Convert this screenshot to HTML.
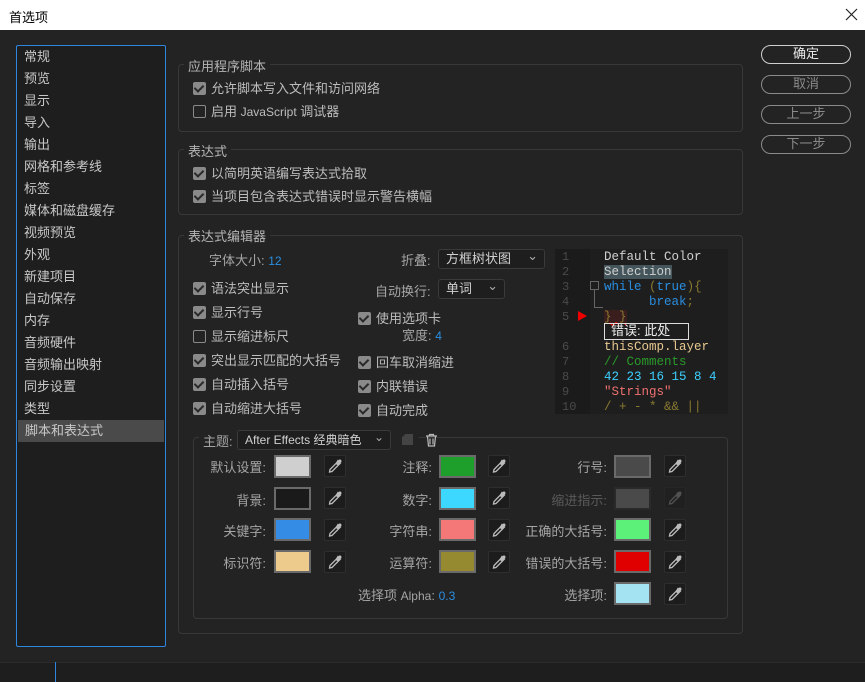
<!DOCTYPE html>
<html><head><meta charset="utf-8">
<style>
*{margin:0;padding:0;box-sizing:border-box}
body{width:865px;height:682px;overflow:hidden;background:#232323;font-family:"Liberation Sans","Noto Sans CJK SC",sans-serif;font-size:13px;color:#bdbdbd;position:relative}
.a{position:absolute;white-space:nowrap}
.title{left:0;top:0;width:865px;height:30px;background:#fff;color:#000}
.side{left:16px;top:45px;width:150px;height:602px;background:#1e1e1e;border:1px solid #2e86de;border-radius:2px}
.side div{height:22px;line-height:22px;padding-left:7px;color:#c8c8c8}
.grp{border:1px solid #383838;border-radius:4px}
.gt{background:#232323;padding:0 4px;color:#b5b5b5}
.cb{width:13px;height:13px;border-radius:2px;background:#8a8a8a;display:inline-block;vertical-align:-2px;margin-right:5px;position:relative}
.cb::after{content:"";position:absolute;left:3px;top:1px;width:4px;height:7px;border:solid #2a2a2a;border-width:0 2px 2px 0;transform:rotate(45deg)}
.cb.off{background:none;border:1.5px solid #8a8a8a}
.cb.off::after{display:none}
.btn{left:761px;width:90px;height:19px;border:1.5px solid #8a8a8a;border-radius:10px;text-align:center;line-height:16px;color:#8a8a8a}
.sel{background:#1e1e1e;border:1px solid #3a3a3a;border-radius:3px;height:20px;line-height:18px;padding-left:7px;color:#d0d0d0}
.sel::after{content:"⌄";position:absolute;right:6px;top:-3px;color:#aaa}
.lbl{text-align:right;color:#a5a5a5}
.sw{width:37px;height:23px;border:2px solid #6a6a6a}
.dp{width:22px;height:22px;background:#1c1c1c;border:1px solid #2e2e2e;border-radius:2px}
.code{font-family:"Liberation Mono","DejaVu Sans Mono",monospace;font-size:12.5px;line-height:15px}
.blue{color:#2a8ee0}
</style></head><body>
<div class="a title"><span class="a" style="left:9px;top:7px">首选项</span>
<svg class="a" style="left:845px;top:8px" width="13" height="13"><path d="M1 1L12 12M12 1L1 12" stroke="#222" stroke-width="1.2"/></svg></div>

<div class="a side">
<div>常规</div><div>预览</div><div>显示</div><div>导入</div><div>输出</div><div>网格和参考线</div><div>标签</div><div>媒体和磁盘缓存</div><div>视频预览</div><div>外观</div><div>新建项目</div><div>自动保存</div><div>内存</div><div>音频硬件</div><div>音频输出映射</div><div>同步设置</div><div>类型</div><div style="background:#4a4a4a;margin:0 1px">脚本和表达式</div>
</div>

<div class="a btn" style="top:45px;color:#e8e8e8;border-color:#cfcfcf">确定</div>
<div class="a btn" style="top:75px">取消</div>
<div class="a btn" style="top:105px">上一步</div>
<div class="a btn" style="top:135px">下一步</div>

<div class="a grp" style="left:178px;top:64px;width:565px;height:68px"></div>
<span class="a gt" style="left:184px;top:56px">应用程序脚本</span>
<div class="a" style="left:193px;top:78px"><span class="cb"></span>允许脚本写入文件和访问网络</div>
<div class="a" style="left:193px;top:101px"><span class="cb off"></span>启用 <span style="font-size:12px">JavaScript</span> 调试器</div>

<div class="a grp" style="left:178px;top:149px;width:565px;height:66px"></div>
<span class="a gt" style="left:184px;top:141px">表达式</span>
<div class="a" style="left:193px;top:163px"><span class="cb"></span>以简明英语编写表达式拾取</div>
<div class="a" style="left:193px;top:186px"><span class="cb"></span>当项目包含表达式错误时显示警告横幅</div>

<div class="a grp" style="left:178px;top:235px;width:565px;height:399px"></div>
<span class="a gt" style="left:184px;top:226px">表达式编辑器</span>
<div class="a" style="left:209px;top:250px;color:#a5a5a5">字体大小: <span class="blue" style="font-size:12px">12</span></div>
<div class="a" style="left:193px;top:278px"><span class="cb"></span>语法突出显示</div>
<div class="a" style="left:193px;top:302px"><span class="cb"></span>显示行号</div>
<div class="a" style="left:193px;top:326px"><span class="cb off"></span>显示缩进标尺</div>
<div class="a" style="left:193px;top:350px"><span class="cb"></span>突出显示匹配的大括号</div>
<div class="a" style="left:193px;top:374px"><span class="cb"></span>自动插入括号</div>
<div class="a" style="left:193px;top:398px"><span class="cb"></span>自动缩进大括号</div>

<div class="a" style="left:401px;top:250px;color:#a5a5a5">折叠:</div>
<div class="a sel" style="left:438px;top:249px;width:107px">方框树状图</div>
<div class="a" style="left:375px;top:281px;color:#a5a5a5">自动换行:</div>
<div class="a sel" style="left:438px;top:279px;width:67px">单词</div>
<div class="a" style="left:358px;top:308px"><span class="cb"></span>使用选项卡</div>
<div class="a" style="left:402px;top:325px;color:#a5a5a5">宽度: <span class="blue" style="font-size:12px">4</span></div>
<div class="a" style="left:358px;top:352px"><span class="cb"></span>回车取消缩进</div>
<div class="a" style="left:358px;top:376px"><span class="cb"></span>内联错误</div>
<div class="a" style="left:358px;top:400px"><span class="cb"></span>自动完成</div>

<div class="a" style="left:555px;top:249px;width:173px;height:165px;background:#1e1e1e"></div>
<div class="a" style="left:555px;top:249px;width:35px;height:165px;background:#1b1b1b"></div>
<div class="a code" style="left:562px;top:250px;color:#4a4a4a;font-size:12px">1<br>2<br>3<br>4<br>5<br><br>6<br>7<br>8<br>9<br>10</div>
<div class="a" style="left:578px;top:311px;width:0;height:0;border-left:9px solid #e00;border-top:5px solid transparent;border-bottom:5px solid transparent"></div>
<div class="a" style="left:590px;top:281px;width:9px;height:9px;border:1px solid #666"></div>
<div class="a" style="left:594px;top:290px;width:1px;height:18px;background:#666"></div>
<div class="a" style="left:594px;top:307px;width:9px;height:1px;background:#666"></div>
<div class="a code" style="left:604px;top:250px;color:#d0d0d0">Default Color<br><span style="background:#44555c">Selection </span><br><span class="blue">while</span> <span style="color:#8a7a30">(</span><span class="blue">true</span><span style="color:#8a7a30">){</span><br>&nbsp;&nbsp;&nbsp;&nbsp;&nbsp;&nbsp;<span class="blue">break</span><span style="color:#8a7a30">;</span><br><span style="color:#8a7a30;background:#3a1e1e;text-decoration:underline wavy #e00">} }</span><br><br><span style="color:#e8c890">thisComp.layer</span><br><span style="color:#2a9a2a">// Comments</span><br><span style="color:#3cd0ff">42 23 16 15 8 4</span><br><span style="color:#f07070">"Strings"</span><br><span style="color:#8a7a30">/ + - * &amp;&amp; ||</span></div>
<div class="a" style="left:604px;top:323px;width:85px;height:17px;border:1.5px solid #ddd;color:#eee;line-height:14px;padding-left:6px">错误: 此处</div>

<div class="a grp" style="left:193px;top:437px;width:535px;height:182px"></div>
<div class="a" style="left:199px;top:430px;width:220px;height:20px;background:#232323"></div>
<div class="a" style="left:203px;top:431px;color:#a5a5a5">主题:</div>
<div class="a sel" style="left:237px;top:430px;width:154px;font-size:12px">After Effects 经典暗色</div>
<div class="a" style="left:402px;top:434px;width:11px;height:11px;background:#444;clip-path:polygon(30% 0,100% 0,100% 100%,0 100%,0 30%)"></div>
<svg class="a" style="left:425px;top:433px" width="13" height="14"><path d="M1 3h11M4.5 3V1.5h4V3M2.5 3.5l1 9.5h6l1-9.5M5 5.5v6M8 5.5v6" fill="none" stroke="#bbb" stroke-width="1.2"/></svg>

<div class="a lbl" style="left:193px;width:73px;top:457px">默认设置:</div>
<div class="a sw" style="left:274px;top:455px;background:#cfcfcf"></div>
<div class="a lbl" style="left:193px;width:73px;top:490px">背景:</div>
<div class="a sw" style="left:274px;top:487px;background:#1a1a1a"></div>
<div class="a lbl" style="left:193px;width:73px;top:521px">关键字:</div>
<div class="a sw" style="left:274px;top:518px;background:#348ce4"></div>
<div class="a lbl" style="left:193px;width:73px;top:553px">标识符:</div>
<div class="a sw" style="left:274px;top:550px;background:#eccb8c"></div>

<div class="a lbl" style="left:360px;width:72px;top:457px">注释:</div>
<div class="a sw" style="left:439px;top:455px;background:#1e9e2a"></div>
<div class="a lbl" style="left:360px;width:72px;top:490px">数字:</div>
<div class="a sw" style="left:439px;top:487px;background:#3dd8ff"></div>
<div class="a lbl" style="left:360px;width:72px;top:521px">字符串:</div>
<div class="a sw" style="left:439px;top:518px;background:#f47878"></div>
<div class="a lbl" style="left:360px;width:72px;top:553px">运算符:</div>
<div class="a sw" style="left:439px;top:550px;background:#958a30"></div>
<div class="a" style="left:358px;top:585px;color:#a5a5a5">选择项 <span style="font-size:12px">Alpha</span>: <span class="blue" style="font-size:12px">0.3</span></div>

<div class="a lbl" style="left:500px;width:107px;top:457px">行号:</div>
<div class="a sw" style="left:614px;top:455px;background:#4a4a4a"></div>
<div class="a lbl" style="left:500px;width:107px;top:490px;color:#5a5a5a">缩进指示:</div>
<div class="a sw" style="left:614px;top:487px;background:#4a4a4a;border-color:#2a2a2a"></div>
<div class="a lbl" style="left:500px;width:107px;top:521px">正确的大括号:</div>
<div class="a sw" style="left:614px;top:518px;background:#5cf27a"></div>
<div class="a lbl" style="left:500px;width:107px;top:553px">错误的大括号:</div>
<div class="a sw" style="left:614px;top:550px;background:#e00000"></div>
<div class="a lbl" style="left:500px;width:107px;top:585px">选择项:</div>
<div class="a sw" style="left:614px;top:582px;background:#a4e4f2"></div>

<svg width="0" height="0" style="position:absolute"><defs><g id="dr"><path d="M13 4.5l2.5 2.5-2 2-6.5 6.5-2.5.5.5-2.5 6.5-6.5z" fill="none" stroke="#bbb" stroke-width="1.3"/><path d="M12.5 7.5l2.5-2.5" stroke="#bbb" stroke-width="3" stroke-linecap="round"/></g></defs></svg>
<div class="a dp" style="left:324px;top:455px"><svg width="20" height="20"><use href="#dr"/></svg></div>
<div class="a dp" style="left:324px;top:487px"><svg width="20" height="20"><use href="#dr"/></svg></div>
<div class="a dp" style="left:324px;top:519px"><svg width="20" height="20"><use href="#dr"/></svg></div>
<div class="a dp" style="left:324px;top:551px"><svg width="20" height="20"><use href="#dr"/></svg></div>
<div class="a dp" style="left:488px;top:455px"><svg width="20" height="20"><use href="#dr"/></svg></div>
<div class="a dp" style="left:488px;top:487px"><svg width="20" height="20"><use href="#dr"/></svg></div>
<div class="a dp" style="left:488px;top:519px"><svg width="20" height="20"><use href="#dr"/></svg></div>
<div class="a dp" style="left:488px;top:551px"><svg width="20" height="20"><use href="#dr"/></svg></div>
<div class="a dp" style="left:664px;top:455px"><svg width="20" height="20"><use href="#dr"/></svg></div>
<div class="a dp" style="left:664px;top:487px;opacity:.3"><svg width="20" height="20"><use href="#dr"/></svg></div>
<div class="a dp" style="left:664px;top:519px"><svg width="20" height="20"><use href="#dr"/></svg></div>
<div class="a dp" style="left:664px;top:551px"><svg width="20" height="20"><use href="#dr"/></svg></div>
<div class="a dp" style="left:664px;top:583px"><svg width="20" height="20"><use href="#dr"/></svg></div>

<div class="a" style="left:0;top:662px;width:865px;height:20px;background:#1e1e1e;border-top:1px solid #2c2c2c"></div>
<div class="a" style="left:55px;top:662px;width:1px;height:20px;background:#2d86de"></div>
</body></html>
